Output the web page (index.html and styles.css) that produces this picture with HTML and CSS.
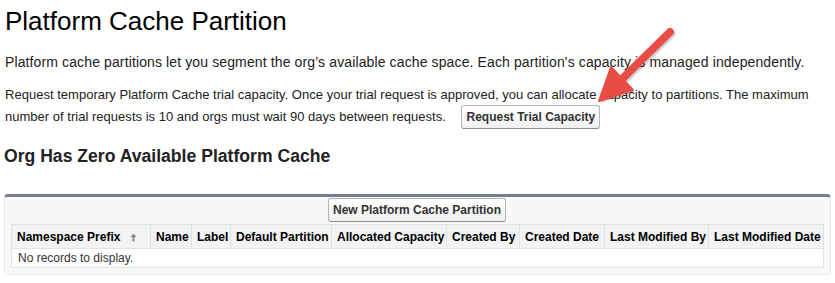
FILE: index.html
```html
<!DOCTYPE html>
<html lang="en">
<head>
    <meta charset="UTF-8">
    <meta name="viewport" content="width=device-width, initial-scale=1.0">
    <title>Platform Cache Partition</title>
    <link rel="stylesheet" href="styles.css">
</head>
<body>
    <h1 class="title">Platform Cache Partition</h1>

    <p class="intro">Platform cache partitions let you segment the org’s available cache space. Each partition's capacity is managed independently.</p>

    <p class="trial">Request temporary Platform Cache trial capacity. Once your trial request is approved, you can allocate capacity to partitions. The maximum number of trial requests is 10 and orgs must wait 90 days between requests. <button class="btn trial-btn">Request Trial Capacity</button></p>

    <h2 class="subtitle">Org Has Zero Available Platform Cache</h2>

    <div class="panel">
        <div class="panel-buttons">
            <button class="btn">New Platform Cache Partition</button>
        </div>
        <table class="list">
            <colgroup>
                <col style="width: 139px">
                <col style="width: 41px">
                <col style="width: 39px">
                <col style="width: 101px">
                <col style="width: 115px">
                <col style="width: 73px">
                <col style="width: 85px">
                <col style="width: 104px">
                <col style="width: 115px">
            </colgroup>
            <thead>
                <tr>
                    <th>Namespace Prefix <svg class="sort" width="7" height="9" viewBox="0 0 7 9"><path d="M3.5 0.5 L6.5 4 H4.5 V8.5 H2.5 V4 H0.5 Z" fill="#8a8a8a"/></svg></th>
                    <th>Name</th>
                    <th>Label</th>
                    <th>Default Partition</th>
                    <th>Allocated Capacity</th>
                    <th>Created By</th>
                    <th>Created Date</th>
                    <th>Last Modified By</th>
                    <th>Last Modified Date</th>
                </tr>
            </thead>
            <tbody>
                <tr>
                    <td colspan="9">No records to display.</td>
                </tr>
            </tbody>
        </table>
    </div>

    <!-- annotation arrow drawn over the page -->
    <svg class="arrow" width="835" height="283" viewBox="0 0 835 283">
        <g fill="#000" stroke="#000" opacity="0.18" transform="translate(1.5,2)">
            <line x1="670" y1="32" x2="620" y2="81" stroke-width="8" stroke-linecap="round"/>
            <polygon points="599,101 633,90 611,67" stroke="none"/>
        </g>
        <g fill="#e84c45" stroke="#e84c45">
            <line x1="670" y1="32" x2="620" y2="81" stroke-width="8" stroke-linecap="round"/>
            <polygon points="599,101 633,90 611,67" stroke-width="2" stroke-linejoin="round"/>
        </g>
    </svg>
</body>
</html>
```

FILE: styles.css
```css
* {
    margin: 0;
    padding: 0;
    box-sizing: border-box;
}

body {
    width: 835px;
    height: 283px;
    overflow: hidden;
    padding: 6px 4px 0 5px;
    font-family: Arial, "Liberation Sans", sans-serif;
    color: #222;
    background: #fff;
    position: relative;
}

.title {
    font-size: 26px;
    font-weight: normal;
    line-height: 30px;
    color: #000;
}

.intro {
    font-size: 14px;
    letter-spacing: 0.12px;
    line-height: 20px;
    margin-top: 16px;
}

.trial {
    font-size: 13px;
    letter-spacing: 0.02px;
    line-height: 20px;
    margin-top: 13px;
}

.btn {
    font-family: Arial, "Liberation Sans", sans-serif;
    font-size: 12px;
    letter-spacing: 0;
    font-weight: bold;
    color: #333;
    background: linear-gradient(#ffffff, #f0f0f0);
    border: 1px solid #b5b5b5;
    border-bottom-color: #8f8f8f;
    border-radius: 3px;
    padding: 4px 4px;
    line-height: 14px;
}

.trial-btn {
    margin-left: 12px;
}

.subtitle {
    font-size: 17.6px;
    font-weight: bold;
    line-height: 20px;
    color: #222;
    margin-top: 17px;
    margin-left: -1px;
}

.panel {
    margin-top: 28px;
    margin-left: -1px;
    width: 827px;
    background: #f8f8f8;
    border: 1px solid #eaeaea;
    border-top: 3px solid #747e96;
    border-radius: 4px;
    padding: 1px 7px 6px 6px;
}

.panel-buttons {
    display: flex;
    justify-content: center;
    padding-bottom: 2px;
}

.list {
    width: 812px;
    table-layout: fixed;
    border-collapse: collapse;
    background: #fff;
    border: 1px solid #e0e3e5;
    font-size: 12px;
}

.list th {
    background: #f2f3f3;
    color: #000;
    font-weight: bold;
    text-align: left;
    white-space: nowrap;
    overflow: hidden;
    padding: 4px 2px 4px 5px;
    height: 24px;
    border: 1px solid #e0e3e5;
}

.sort {
    margin-left: 6px;
    vertical-align: -1px;
}

.list td {
    padding: 2px 6px;
    height: 19px;
    color: #333;
}

.arrow {
    position: absolute;
    left: 0;
    top: 0;
    pointer-events: none;
}
```
